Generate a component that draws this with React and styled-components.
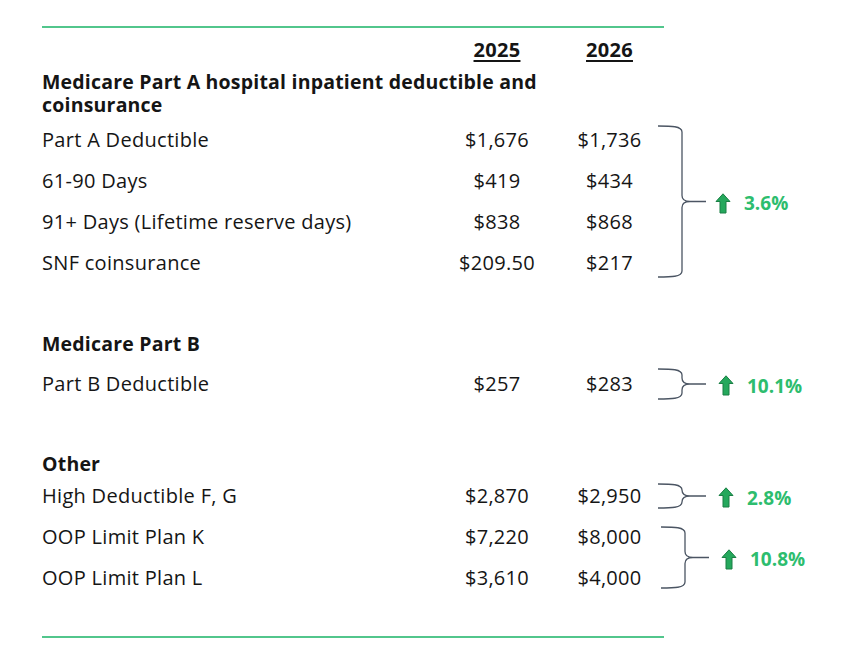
import React from "react";
import styled, { createGlobalStyle } from "styled-components";

const GlobalStyle = createGlobalStyle`
  body {
    margin: 0;
    background: #ffffff;
    font-family: "Open Sans", "Liberation Sans", sans-serif;
    color: #151515;
  }
`;

const sections = [
  {
    title: "Medicare Part A hospital inpatient deductible and coinsurance",
    top: 0,
    titleGap: 3,
    rows: [
      ["Part A Deductible", "$1,676", "$1,736"],
      ["61-90 Days", "$419", "$434"],
      ["91+ Days (Lifetime reserve days)", "$838", "$868"],
      ["SNF coinsurance", "$209.50", "$217"],
    ],
    braces: [{ start: 0, span: 4, h: 153, pct: "3.6%", gap: 8 }],
  },
  {
    title: "Medicare Part B",
    top: 49,
    titleGap: 8,
    rows: [["Part B Deductible", "$257", "$283"]],
    braces: [{ start: 0, span: 1, h: 32, pct: "10.1%" }],
  },
  {
    title: "Other",
    top: 48,
    titleGap: 0,
    rows: [
      ["High Deductible F, G", "$2,870", "$2,950"],
      ["OOP Limit Plan K", "$7,220", "$8,000"],
      ["OOP Limit Plan L", "$3,610", "$4,000"],
    ],
    braces: [
      { start: 0, span: 1, h: 26, pct: "2.8%" },
      { start: 1, span: 2, h: 63, pct: "10.8%", shift: 3 },
    ],
  },
];

const Brace = ({ h }) => {
  const m = h / 2;
  const d = `M1 1 C14 1 25 1 25 7 L25 ${Math.max(7, m - 6)} C25 ${m - 1} 29 ${m} 33 ${m} L49 ${m} M33 ${m} C29 ${m} 25 ${m + 1} 25 ${Math.min(h - 7, m + 6)} L25 ${h - 7} C25 ${h - 1} 14 ${h - 1} 1 ${h - 1}`;
  return (
    <svg width="50" height={h} viewBox={`0 0 50 ${h}`}>
      <path d={d} fill="none" stroke="#4b5563" strokeWidth="1.3" />
    </svg>
  );
};

const UpArrow = () => (
  <svg width="16" height="21" viewBox="0 0 16 21">
    <path
      d="M8 0.8 L15 8.5 L11 8.5 L11 20 L5 20 L5 8.5 L1 8.5 Z"
      fill="#25a85c"
      stroke="#1b7f45"
      strokeWidth="1"
      strokeLinejoin="round"
    />
  </svg>
);

const Page = styled.div`
  padding: 26px 0 0 42px;
`;

const Rule = styled.div`
  width: 622px;
  height: 2px;
  background: #52c68c;
  margin-top: ${(p) => p.$top || 0}px;
`;

const Section = styled.section`
  margin-top: ${(p) => p.$top || 0}px;
`;

const Grid = styled.div`
  display: grid;
  grid-template-columns: 400px 110px 105px 1fr;
  grid-auto-rows: ${(p) => p.$rowH || 41}px;
  font-size: 20px;
  letter-spacing: 0.3px;
`;

const Year = styled.div`
  grid-column: ${(p) => p.$col};
  display: flex;
  align-items: center;
  justify-content: center;
  padding-left: ${(p) => (p.$col === 3 ? 10 : 0)}px;
  font-weight: 700;
  text-decoration: underline;
  text-underline-offset: 3px;
  text-decoration-thickness: 1.5px;
`;

const TitleBlock = styled.div`
  width: 510px;
  font-size: 19.5px;
  font-weight: 700;
  letter-spacing: 0.2px;
  line-height: 23px;
  margin-bottom: ${(p) => p.$gap}px;
`;

const Label = styled.div`
  grid-column: 1;
  display: flex;
  align-items: center;
`;

const Value = styled.div`
  grid-column: ${(p) => p.$col};
  display: flex;
  align-items: center;
  justify-content: center;
  padding-left: ${(p) => (p.$col === 3 ? 10 : 0)}px;
`;

const BraceCell = styled.div`
  grid-column: 4;
  grid-row: span ${(p) => p.$span};
  display: flex;
  align-items: center;
  padding-left: ${(p) => p.$shift || 0}px;
`;

const Change = styled.div`
  display: flex;
  align-items: center;
  gap: 13px;
  margin-left: ${(p) => p.$gap || 11}px;
  margin-top: 4px;
  font-size: 19px;
  font-weight: 700;
  letter-spacing: 0;
  color: #2dbd6e;
`;

export default function App() {
  return (
    <Page>
      <GlobalStyle />
      <Rule />
      <Grid $rowH={42}>
        <Year $col={2}>2025</Year>
        <Year $col={3}>2026</Year>
      </Grid>
      {sections.map((s) => (
        <Section key={s.title} $top={s.top}>
          <TitleBlock $gap={s.titleGap}>{s.title}</TitleBlock>
          <Grid>
            {s.rows.map((r, i) => {
              const brace = s.braces.find((b) => b.start === i);
              return (
                <React.Fragment key={r[0]}>
                  <Label>{r[0]}</Label>
                  <Value $col={2}>{r[1]}</Value>
                  <Value $col={3}>{r[2]}</Value>
                  {brace && (
                    <BraceCell $span={brace.span} $shift={brace.shift}>
                      <Brace h={brace.h} />
                      <Change $gap={brace.gap}>
                        <UpArrow />
                        {brace.pct}
                      </Change>
                    </BraceCell>
                  )}
                </React.Fragment>
              );
            })}
          </Grid>
        </Section>
      ))}
      <Rule $top={38} />
    </Page>
  );
}
